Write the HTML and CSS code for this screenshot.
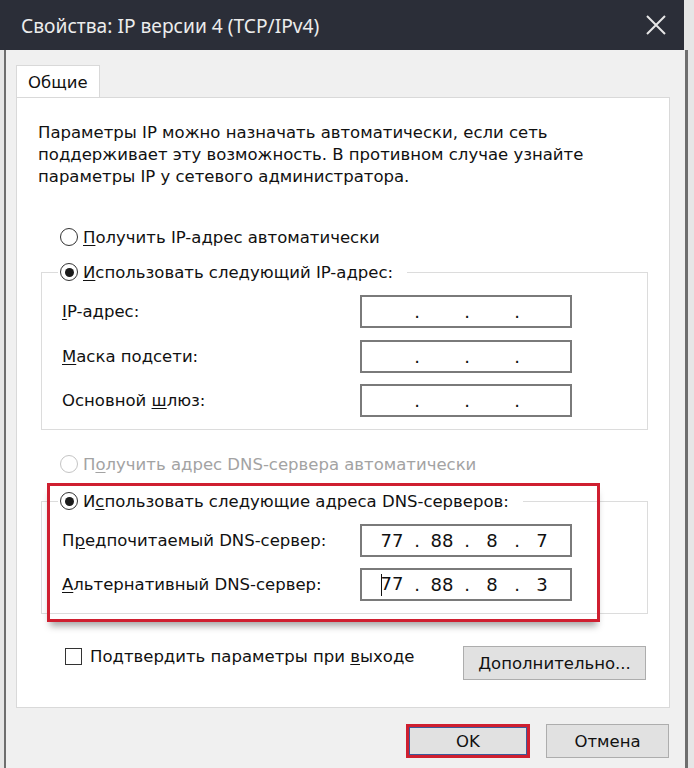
FILE: index.html
```html
<!DOCTYPE html>
<html lang="ru">
<head>
    <meta charset="UTF-8">
    <meta name="viewport" content="width=device-width, initial-scale=1.0">
    <title>Свойства: IP версии 4 (TCP/IPv4)</title>
    <link rel="stylesheet" href="styles.css">
</head>
<body>
    <div class="window">
        <div class="titlebar">
            <span class="title">Свойства: IP версии 4 (TCP/IPv4)</span>
            <svg class="close" viewBox="0 0 20 20">
                <path d="M1 1 L19 19 M19 1 L1 19" stroke="#e6e6e6" stroke-width="2" fill="none"/>
            </svg>
        </div>

        <div class="frame">
            <div class="tabs"><div class="tab">Общие</div></div>

            <div class="panel">
                <p class="intro">Параметры IP можно назначать автоматически, если сеть<br>поддерживает эту возможность. В противном случае узнайте<br>параметры IP у сетевого администратора.</p>

                <div class="radio-row first"><span class="radio"></span><span><u>П</u>олучить IP-адрес автоматически</span></div>

                <fieldset class="group">
                    <legend class="radio-row"><span class="radio on"></span><span><u>И</u>спользовать следующий IP-адрес:</span></legend>
                    <div class="fields">
                        <label><u>I</u>P-адрес:</label>
                        <div class="ipbox"><span></span><span>.</span><span></span><span>.</span><span></span><span>.</span><span></span></div>
                        <label><u>М</u>аска подсети:</label>
                        <div class="ipbox"><span></span><span>.</span><span></span><span>.</span><span></span><span>.</span><span></span></div>
                        <label>Основной <u>ш</u>люз:</label>
                        <div class="ipbox"><span></span><span>.</span><span></span><span>.</span><span></span><span>.</span><span></span></div>
                    </div>
                </fieldset>

                <div class="radio-row disabled"><span class="radio"></span><span>П<u>о</u>лучить адрес DNS-сервера автоматически</span></div>

                <fieldset class="group dns">
                    <legend class="radio-row"><span class="radio on"></span><span>И<u>с</u>пользовать следующие адреса DNS-серверов:</span></legend>
                    <div class="fields">
                        <label>П<u>р</u>едпочитаемый DNS-сервер:</label>
                        <div class="ipbox"><span>77</span><span>.</span><span>88</span><span>.</span><span>8</span><span>.</span><span>7</span></div>
                        <label><u>А</u>льтернативный DNS-сервер:</label>
                        <div class="ipbox"><span><i class="caret"></i>77</span><span>.</span><span>88</span><span>.</span><span>8</span><span>.</span><span>3</span></div>
                    </div>
                </fieldset>

                <div class="options">
                    <div class="check-row"><span class="checkbox"></span><span>Подтвердить параметры при <u>в</u>ыходе</span></div>
                    <button class="btn more"><u>Д</u>ополнительно...</button>
                </div>

                <div class="mark"></div>
            </div>

            <div class="actions">
                <button class="btn ok">OK</button>
                <button class="btn">Отмена</button>
            </div>
        </div>
    </div>
</body>
</html>
```

FILE: styles.css
```css
*{margin: 0; padding: 0; box-sizing: border-box;}
body{
    background-color: #e6e6e6;
    font-family: "DejaVu Sans", Verdana, sans-serif;
    font-size: 16.5px;
    color: #111;
}
u{text-decoration: underline; text-underline-offset: 2px;}

.window{width: 690px;}

.titlebar{
    width: 684px;
    height: 50px;
    background-color: #2b2e38;
    display: flex;
    align-items: center;
    justify-content: space-between;
    padding: 0 18px 0 21px;
}
.title{
    font-family: "Noto Sans", sans-serif;
    font-size: 19.2px;
    color: #ececec;
}
.close{width: 20px; height: 20px;}

.frame{
    margin-left: 4px;
    width: 684px;
    height: 718px;
    background-color: #f0f0f0;
    border-left: 2px solid #6e6e6e;
    border-right: 3px solid #6e6e6e;
    padding: 15px 16px 0 10px;
}

.tabs{display: flex; height: 32px;}
.tab{
    position: relative;
    width: 84px;
    height: 33px;
    padding-left: 11px;
    line-height: 33px;
    background-color: #fff;
    border: 1px solid #d9d9d9;
    border-bottom: none;
}

.panel{
    position: relative;
    width: 654px;
    height: 611px;
    background-color: #fff;
    border: 1px solid #d9d9d9;
    padding: 24px 21px 0 21px;
}
.intro{line-height: 22px;}

.radio-row{
    display: flex;
    align-items: center;
    height: 24px;
    padding-left: 22px;
}
.radio-row.first{margin-top: 37px;}
.radio{
    width: 18px;
    height: 18px;
    border: 1.5px solid #333;
    border-radius: 50%;
    background-color: #fff;
    display: flex;
    align-items: center;
    justify-content: center;
    flex: none;
    margin-right: 5px;
}
.radio.on::after{
    content: "";
    width: 9px;
    height: 9px;
    border-radius: 50%;
    background-color: #1b1b1b;
}
.radio-row.disabled{margin-top: 22px; color: #a3a3a3;}
.radio-row.disabled .radio{border-color: #c4c4c4;}

.group{
    margin: 11px 0 0 3px;
    width: 607px;
    border: 1px solid #dcdcdc;
    padding: 11px 0 12px 20px;
}
.group.dns{margin-top: 13px;}
.group legend{
    padding: 0 14px 0 2px;
    margin-left: -4px;
}

.fields{
    display: grid;
    grid-template-columns: 298px 212px;
    row-gap: 11.5px;
    align-items: center;
}
.dns .fields{row-gap: 11px;}

.ipbox{
    height: 33px;
    border: 2px solid #7a7a7a;
    display: grid;
    grid-template-columns: 40px 10px 40px 10px 40px 10px 40px;
    padding-left: 10px;
    align-items: center;
    text-align: center;
    font-size: 18px;
    background-color: #fff;
}
.caret{
    display: inline-block;
    width: 1px;
    height: 22px;
    background-color: #111;
    vertical-align: middle;
    margin-right: -1px;
}

.options{
    display: flex;
    justify-content: space-between;
    align-items: flex-start;
    margin-top: 32px;
}
.check-row{
    display: flex;
    align-items: center;
    height: 20px;
    padding-left: 27px;
}
.checkbox{
    width: 17px;
    height: 17px;
    border: 1.5px solid #333;
    background-color: #fff;
    margin-right: 8px;
}

.btn{
    height: 34px;
    background-color: #e1e1e1;
    border: 1px solid #adadad;
    font-family: "DejaVu Sans", Verdana, sans-serif;
    font-size: 16.5px;
    color: #111;
}
.btn.more{width: 183px; margin-right: 2px;}

.actions{
    display: flex;
    justify-content: flex-end;
    gap: 16px;
    margin-top: 16px;
}
.actions .btn{width: 123px;}
.btn.ok{
    border: 3px solid #cf1f30;
    box-shadow: inset 0 0 0 1px #3c5a9a;
    width: 124px;
}

/* красная рамка-выделение поверх DNS */
.mark{
    position: absolute;
    left: 30px;
    top: 385px;
    width: 553px;
    height: 139px;
    border: 3px solid #cf1f30;
    box-shadow: 0 7px 7px -3px rgba(0,0,0,0.35);
}
```
